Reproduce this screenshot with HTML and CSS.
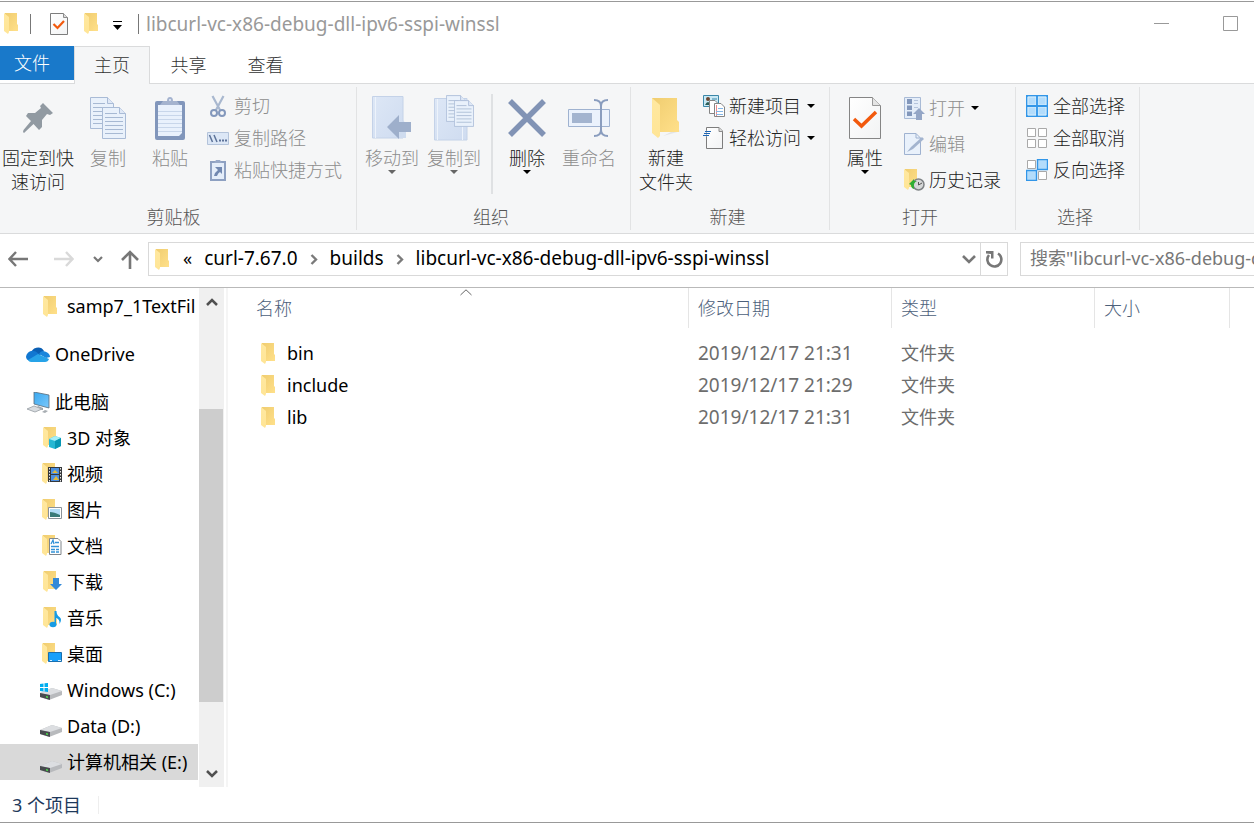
FILE: index.html
```html
<!DOCTYPE html>
<html lang="zh-CN">
<head>
<meta charset="utf-8">
<title>libcurl-vc-x86-debug-dll-ipv6-sspi-winssl</title>
<link rel="stylesheet" href="styles.css">
</head>
<body>
<svg class="defs" width="0" height="0" aria-hidden="true">
  <defs>
    <linearGradient id="gold" x1="0" x2="1" y1="0" y2="1"><stop offset="0" stop-color="#f0cd70"/><stop offset="1" stop-color="#ffe08a"/></linearGradient>
    <linearGradient id="flap" x1="0" x2="0" y1="0" y2="1"><stop offset="0" stop-color="#ffe8a0"/><stop offset="1" stop-color="#ffe596"/></linearGradient>
    <linearGradient id="paper" x1="0" x2="1" y1="0" y2="1"><stop offset="0" stop-color="#fff"/><stop offset="1" stop-color="#f2f3f4"/></linearGradient>
    <linearGradient id="blueSheet" x1="0" x2="1" y1="0" y2="1"><stop offset="0" stop-color="#dde7f6"/><stop offset="1" stop-color="#cfdcf0"/></linearGradient>
    <linearGradient id="screen" x1="0" x2="1" y1="0" y2="1"><stop offset="0" stop-color="#38a8f0"/><stop offset="1" stop-color="#7cc8fa"/></linearGradient>
    <symbol id="folder" viewBox="0 0 14 21"><path d="M1 0H13V11L14 12V18H1z" fill="url(#gold)"/><path d="M0 0L5 4V19L4 21L0 18z" fill="url(#flap)"/></symbol>
    <symbol id="sheet" viewBox="0 0 24 32"><path d="M.5 .5H17.5L23.5 6.5V31.5H.5z" fill="#e9f1fb" stroke="#a9bbd6"/><path d="M17.5 .5V6.5H23.5" fill="#dfe8f6" stroke="#a9bbd6"/><path d="M3 6.5H15M3 10.5H21M3 14.5H21M3 18.5H21M3 22.5H21M3 26.5H21" stroke="#a7b9d3"/></symbol>
    <symbol id="drive" viewBox="0 0 22 12"><path d="M0 5L12 0L22 3V7L9 12L0 9z" fill="#b8babd"/><path d="M0 5L12 0L22 3L10 7z" fill="#dcdee1"/><path d="M0 5L10 7V12L0 9z" fill="#484b4e"/><path d="M6 8L8 8.500V10L6 9.500z" fill="#4ce04c"/></symbol>
    <symbol id="caret" viewBox="0 0 8 4"><path d="M0 0H8L4 4z" fill="currentColor"/></symbol>
    <symbol id="crumb" viewBox="0 0 8 11"><path d="M1.500 1L6 5.500L1.500 10" fill="none" stroke="#7a7a7a" stroke-width="2.400"/></symbol>
  </defs>
</svg>

<div class="window">
  <header class="titlebar">
    <svg class="i-folder" width="14" height="21"><use href="#folder"/></svg>
    <span class="bar"></span>
    <div class="quick">
      <button type="button" aria-label="属性"><svg width="18" height="22" viewBox="0 0 18 22"><path d="M.5 .5H13.5L17.500 4.500V21.500H.5z" fill="url(#paper)" stroke="#7d7d7d"/><path d="M13.500 .5V4.500H17.500" fill="#ddd" stroke="#8d8d8d"/><path d="M3.500 11L7.500 15L14 8" fill="none" stroke="#f2590d" stroke-width="2.200"/></svg></button>
      <button type="button" aria-label="新建文件夹"><svg width="14" height="21"><use href="#folder"/></svg></button>
      <button type="button" class="customize" aria-label="自定义快速访问工具栏"><svg width="9" height="9" viewBox="0 0 9 9"><path d="M0 .5H9" stroke="#000"/><path d="M0 4H9L4.500 9z"/></svg></button>
    </div>
    <span class="bar"></span>
    <h1>libcurl-vc-x86-debug-dll-ipv6-sspi-winssl</h1>
    <div class="caption">
      <button type="button" aria-label="最小化"><svg width="15" height="15" viewBox="0 0 15 15"><path d="M0 7.500H15" stroke="#999"/></svg></button>
      <button type="button" aria-label="最大化"><svg width="15" height="15" viewBox="0 0 15 15"><path d="M.5 .5H14.500V14.500H.5z" fill="none" stroke="#999"/></svg></button>
    </div>
  </header>

  <nav class="tabs">
    <button type="button" class="tab file">文件</button>
    <button type="button" class="tab active">主页</button>
    <button type="button" class="tab">共享</button>
    <button type="button" class="tab">查看</button>
  </nav>

  <section class="ribbon">
    <div class="group clipboard">
      <div class="tools">
        <button type="button" class="big wide"><span class="pic"><svg width="32" height="32" viewBox="0 0 32 32"><path d="M21 1L31 11L28 13L25 12L20 18V25L17 28L11.500 22L2 31L1 30L1.500 28L9 19L4 14L6 11H13L19 6L18 4z" fill="#919aa2"/></svg></span><span>固定到快速访问</span></button>
        <button type="button" class="big off"><span class="pic"><svg width="37" height="42" viewBox="0 0 37 42"><use href="#sheet" width="24" height="32"/><use href="#sheet" x="12" y="10" width="24" height="32"/></svg></span><span>复制</span></button>
        <button type="button" class="big off"><span class="pic"><svg width="31" height="43" viewBox="0 0 31 43"><rect y="4" width="30" height="39" rx="2" fill="#8196bb"/><path d="M3 8H27V36L24 39H3z" fill="#e9f1fc"/><path d="M3 14.500H27M3 18.500H27M3 22.500H27M3 26.500H27M3 30.500H27M3 34.500H27" stroke="#c8d6ea"/><path d="M5 8L8 4H12Q12 0 15 0T18 4H22L25 8z" fill="#a4b3cf"/><circle cx="15" cy="3" r="1" fill="#e9f1fc"/></svg></span><span>粘贴</span></button>
        <div class="stack">
          <button type="button" class="small off"><span class="ico"><svg width="16" height="23" viewBox="0 0 16 23"><path d="M2.500 1L10 15M13.500 1L6 15" stroke="#a9b8cf" stroke-width="2.200"/><circle cx="4" cy="18" r="3" fill="none" stroke="#8398bc" stroke-width="2"/><circle cx="12" cy="18" r="3" fill="none" stroke="#8398bc" stroke-width="2"/></svg></span>剪切</button>
          <button type="button" class="small off"><span class="ico"><svg width="22" height="13" viewBox="0 0 22 13"><path d="M.5 .5H21.500V12.500H.5z" fill="#dce7f6" stroke="#b3c3da"/><path d="M2.500 3L5.500 10M7 3L10 10" stroke="#5d7399" stroke-width="1.500"/><path d="M12 8.500H14M15 8.500H17M18 8.500H20" stroke="#5d7399" stroke-width="2"/></svg></span>复制路径</button>
          <button type="button" class="small off"><span class="ico"><svg width="16" height="22" viewBox="0 0 16 22"><path d="M1 3H15V21H1z" fill="#e4edf9" stroke="#8da0c1" stroke-width="2"/><path d="M4 4L6 1H10L12 4z" fill="#98a9c7"/><path d="M5 8H12V15L10 13Q8 14 7 17H4Q5 13 8 11z" fill="#7188b0"/></svg></span>粘贴快捷方式</button>
        </div>
      </div>
      <h2>剪贴板</h2>
    </div>

    <div class="group organize">
      <div class="tools">
        <button type="button" class="big off"><span class="pic"><svg width="40" height="44" viewBox="0 0 40 44"><path d="M.5 .5H31V42H.5z" fill="url(#blueSheet)" stroke="#c4d2e8"/><path d="M3.500 1V42" stroke="#edf3fb"/><path d="M28 30L31 24L34 28V42H28z" fill="#cfdcef"/><path d="M15 31L27 19V26H39V36H27V43z" fill="#9eafcb"/></svg></span><span>移动到</span><svg class="drop" width="8" height="4"><use href="#caret"/></svg></button>
        <button type="button" class="big off"><span class="pic"><svg width="40" height="46" viewBox="0 0 40 46"><path d="M.5 3.500H33V45H.5z" fill="url(#blueSheet)" stroke="#c4d2e8"/><path d="M3.500 4V45M28.500 30V45" stroke="#edf3fb"/><use href="#sheet" x="12" width="20" height="27"/><use href="#sheet" x="20" y="5" width="20" height="27"/></svg></span><span>复制到</span><svg class="drop" width="8" height="4"><use href="#caret"/></svg></button>
        <span class="split"></span>
        <button type="button" class="big"><span class="pic"><svg width="38" height="38" viewBox="0 0 38 38"><path d="M2 2L36 36M36 2L2 36" stroke="#8193b5" stroke-width="5.500"/></svg></span><span>删除</span><svg class="drop" width="8" height="4"><use href="#caret"/></svg></button>
        <button type="button" class="big off"><span class="pic"><svg width="42" height="38" viewBox="0 0 42 38"><path d="M.5 10.500H41.500V27.500H.5z" fill="#ebf2fc" stroke="#9fb2d0"/><path d="M4 14H24V24H4z" fill="#a3b4cf"/><path d="M26 1Q33 1 33 7V31Q33 37 26 37M40 1Q33 1 33 7V31Q33 37 40 37" fill="none" stroke="#8a9dbe" stroke-width="2"/></svg></span><span>重命名</span></button>
      </div>
      <h2>组织</h2>
    </div>

    <div class="group create">
      <div class="tools">
        <button type="button" class="big"><span class="pic"><svg width="30" height="42" viewBox="0 0 30 42"><path d="M24 33L30 34L12 39z" fill="#e3e4e6"/><path d="M1 1H26V23L28 25V35H1z" fill="url(#gold)"/><path d="M1 1L9 8V39L7 41L1 36z" fill="url(#flap)"/></svg></span><span>新建<br>文件夹</span></button>
        <div class="stack">
          <button type="button" class="small"><span class="ico"><svg width="22" height="22" viewBox="0 0 22 22"><path d="M.5 .5H15.500V11.500H.5z" fill="#c9e9f5" stroke="#3b87a8"/><circle cx="5" cy="4" r="2" fill="#6b4732"/><path d="M2 10Q5 4 8 10z" fill="#2d5e57"/><path d="M9 4H14" stroke="#3b87a8"/><path d="M6.500 5.500H12L14.500 8V18.500H6.500z" fill="#fff" stroke="#858585"/><path d="M11.500 8.500H18L21.500 12V21.500H11.500z" fill="#fff" stroke="#858585"/><path d="M13.500 10V21" stroke="#e88"/><path d="M15 13.500H20M13 16.500H20M13 19.500H20" stroke="#84b6e6"/></svg></span>新建项目<svg class="arrow" width="8" height="4"><use href="#caret"/></svg></button>
          <button type="button" class="small"><span class="ico"><svg width="22" height="22" viewBox="0 0 22 22"><path d="M3.500 .5H16L19.500 4V21.500H3.500z" fill="url(#paper)" stroke="#7d7d7d"/><path d="M16 .5V4.500H19.500" fill="#ddd" stroke="#8d8d8d"/><path d="M3 4.500H3.500M1 6.500H3.500M0 8.500H3.500" stroke="#f5f6f7" stroke-width="2"/><path d="M2 4.500H8M1 6.500H7M0 8.500H6" stroke="#1e66b4" stroke-width="1.200"/></svg></span>轻松访问<svg class="arrow" width="8" height="4"><use href="#caret"/></svg></button>
        </div>
      </div>
      <h2>新建</h2>
    </div>

    <div class="group open">
      <div class="tools">
        <button type="button" class="big"><span class="pic"><svg width="32" height="42" viewBox="0 0 32 42"><path d="M.5 .5H23.500L31.500 8.500V41.500H.5z" fill="url(#paper)" stroke="#858585"/><path d="M23.500 .5V8.500H31.500" fill="#e4e4e4" stroke="#999"/><path d="M5 22L12.500 29L27 15" fill="none" stroke="#f2590d" stroke-width="3.500"/></svg></span><span>属性</span><svg class="drop" width="8" height="4"><use href="#caret"/></svg></button>
        <div class="stack">
          <button type="button" class="small off"><span class="ico"><svg width="21" height="23" viewBox="0 0 21 23"><path d="M.5 .5H16.500V21.500H.5z" fill="#e4edf9" stroke="#a9bbd6"/><path d="M3 2H8V7H3zM3 8.500H8V13H3zM3 14.500H8V19H3z" fill="#8297bb"/><path d="M10 3.500H14M10 6.500H14M10 10.500H14" stroke="#b5c4dc"/><path d="M15 11L21 17H18V23H12V17H9z" fill="#94a6c6"/></svg></span>打开<svg class="arrow" width="8" height="4"><use href="#caret"/></svg></button>
          <button type="button" class="small off"><span class="ico"><svg width="21" height="22" viewBox="0 0 21 22"><path d="M.5 .5H12L16.500 5V21.500H.5z" fill="#e9f1fb" stroke="#9fb2d0"/><path d="M12 .5V5H16.500" fill="none" stroke="#9fb2d0"/><path d="M3 19L7 14L18 4L20 6L9 16z" fill="#a3b4cf"/></svg></span>编辑</button>
          <button type="button" class="small"><span class="ico"><svg width="21" height="22" viewBox="0 0 21 22"><use href="#folder" x="0" y="0" width="14" height="21"/><circle cx="14.500" cy="15.500" r="5.500" fill="#d5d7d8" stroke="#7e8285" stroke-width="1.500"/><path d="M14.500 13V16L18 14" fill="none" stroke="#555"/><path d="M5 15L10 10V12L13 12Q9 13 10 20Q7 19 7 16z" fill="#2ead33"/></svg></span>历史记录</button>
        </div>
      </div>
      <h2>打开</h2>
    </div>

    <div class="group select">
      <div class="tools">
        <div class="stack">
          <button type="button" class="small"><span class="ico"><svg width="22" height="22" viewBox="0 0 22 22"><path d="M.75 .75H21.250V21.250H.75z" fill="#b3dcfb" stroke="#3296e8" stroke-width="1.500"/><path d="M2 2H10V10H2zM12 2H20V10H12zM2 12H10V20H2zM12 12H20V20H12z" fill="none" stroke="#e1f2fe" stroke-width=".8"/><path d="M11 0V22M0 11H22" stroke="#3296e8" stroke-width="1.800"/></svg></span>全部选择</button>
          <button type="button" class="small"><span class="ico"><svg width="22" height="22" viewBox="0 0 22 22"><path d="M1.500 1.500H9.500V9.500H1.500zM12.500 1.500H20.500V9.500H12.500zM1.500 12.500H9.500V20.500H1.500zM12.500 12.500H20.500V20.500H12.500z" fill="#fff" stroke="#a9a9a9"/></svg></span>全部取消</button>
          <button type="button" class="small"><span class="ico"><svg width="22" height="22" viewBox="0 0 22 22"><path d="M1.500 1.500H9.500V9.500H1.500zM12.500 12.500H20.500V20.500H12.500z" fill="#fff" stroke="#a9a9a9"/><path d="M11.500 .5H21.500V10.500H11.500zM.5 11.500H10.500V21.500H.5z" fill="#b3dcfb" stroke="#3296e8" stroke-width="1.400"/></svg></span>反向选择</button>
        </div>
      </div>
      <h2>选择</h2>
    </div>
  </section>

  <div class="address">
    <div class="nav">
      <button type="button" aria-label="后退"><svg width="20" height="16" viewBox="0 0 20 16"><path d="M8 1L1.500 8L8 15M2 8H20" fill="none" stroke="#777" stroke-width="2.400"/></svg></button>
      <button type="button" aria-label="前进"><svg width="20" height="16" viewBox="0 0 20 16"><path d="M12 1L18.500 8L12 15M18 8H0" fill="none" stroke="#d9d9d9" stroke-width="2.400"/></svg></button>
      <button type="button" aria-label="最近浏览的位置"><svg width="10" height="7" viewBox="0 0 10 7"><path d="M1 1L5 5L9 1" fill="none" stroke="#777" stroke-width="2.200"/></svg></button>
      <button type="button" aria-label="上移"><svg width="18" height="19" viewBox="0 0 18 19"><path d="M1 10L9 2L17 10M9 2V19" fill="none" stroke="#777" stroke-width="2.600"/></svg></button>
    </div>
    <div class="path">
      <svg width="14" height="21"><use href="#folder"/></svg>
      <span class="more">«</span>
      <a href="#">curl-7.67.0</a>
      <svg width="8" height="11"><use href="#crumb"/></svg>
      <a href="#">builds</a>
      <svg width="8" height="11"><use href="#crumb"/></svg>
      <a href="#">libcurl-vc-x86-debug-dll-ipv6-sspi-winssl</a>
      <button type="button" class="history" aria-label="以前的位置"><svg width="14" height="9" viewBox="0 0 14 9"><path d="M1 1L7 7L13 1" fill="none" stroke="#777" stroke-width="2.600"/></svg></button>
      <button type="button" class="refresh" aria-label="刷新"><svg width="18" height="18" viewBox="0 0 18 18"><path d="M13 3.500A7 7 0 1 1 4 5" fill="none" stroke="#777" stroke-width="2.600"/><path d="M1 1H8.500V8.500H6V4L1 3.500z" fill="#777"/></svg></button>
    </div>
    <input class="search" type="text" aria-label="搜索" placeholder="搜索&quot;libcurl-vc-x86-debug-dll-ipv6-sspi-winssl&quot;">
  </div>

  <main class="body">
    <aside class="side">
      <ul class="tree">
        <li class="sub"><svg width="22" height="24" viewBox="0 0 22 24"><use href="#folder" x="3" y="2" width="14" height="21"/></svg><span>samp7_1TextFil</span></li>
        <li class="top"><svg width="24" height="16" viewBox="0 0 24 16"><path d="M5 8A7 7 0 0 1 18 5L14 9z" fill="#0a5fb4"/><path d="M5 5Q9 4 13 8L4 15Q0 14 0 10.500Q1 6 5 5z" fill="#1177d1"/><path d="M13 8Q15 4 19 5.500Q24 7 24 11L20 12z" fill="#1a86dc"/><path d="M2 14L12 8L23 13Q22 16 19 16H5Q3 16 2 14z" fill="#27a3e8"/></svg><span>OneDrive</span></li>
        <li class="top"><svg width="24" height="21" viewBox="0 0 24 21"><path d="M8 0L23 3V16L8 12z" fill="url(#screen)" stroke="#5b6b78" stroke-width=".8"/><path d="M12 14L17 16V18H9z" fill="#9aa3ab"/><path d="M1 17L8 14L16 17L9 20z" fill="#d8dce0" stroke="#a7adb2"/><path d="M16 20L19 18L22 19L19 21z" fill="#a7adb2"/></svg><span>此电脑</span></li>
        <li class="sub"><svg width="22" height="24" viewBox="0 0 22 24"><use href="#folder" x="3" y="1" width="14" height="21"/><path d="M9 13L15 10L21 12V20L15 23L9 21z" fill="#25b7d3"/><path d="M9 13L15 10L21 12L15 15z" fill="#a5eef7"/><path d="M15 15L21 12V20L15 23z" fill="#0797b4"/></svg><span>3D 对象</span></li>
        <li class="sub"><svg width="24" height="24" viewBox="0 0 24 24"><use href="#folder" x="3" y="1" width="14" height="21"/><path d="M9 5H23V20H9z" fill="#35383b"/><path d="M12 6H20V12H12zM12 13H20V19H12z" fill="#4c8fe0"/><path d="M13 11L16 8L19 11zM14 18L17 14L20 18z" fill="#e5b936"/><path d="M10.500 6V20M21.500 6V20" stroke="#e8e8e8" stroke-dasharray="1.500 1.500"/></svg><span>视频</span></li>
        <li class="sub"><svg width="24" height="24" viewBox="0 0 24 24"><use href="#folder" x="3" y="1" width="14" height="21"/><path d="M9.500 9.500H22.500V20.500H9.500z" fill="#fff" stroke="#8b9298"/><path d="M11 11H21V19H11z" fill="#b2dcf6"/><path d="M11 14Q15 14 21 17V19H11z" fill="#397a78"/></svg><span>图片</span></li>
        <li class="sub"><svg width="24" height="24" viewBox="0 0 24 24"><use href="#folder" x="3" y="1" width="14" height="21"/><path d="M10.500 4.500H19L22 7.500V20.500H10.500z" fill="#fff" stroke="#80868b"/><path d="M12 10L14 6L15 10M16 8.500H20M12 12.500H20M12 15.500H16M12 18H16M17 15.500H20M17 18H20" fill="none" stroke="#3292d8" stroke-width="1.300"/></svg><span>文档</span></li>
        <li class="sub"><svg width="22" height="24" viewBox="0 0 22 24"><use href="#folder" x="3" y="1" width="14" height="21"/><path d="M13 8H19V14H22L16 20L10 14H13z" fill="#3389d8"/></svg><span>下载</span></li>
        <li class="sub"><svg width="22" height="24" viewBox="0 0 22 24"><use href="#folder" x="3" y="1" width="14" height="21"/><ellipse cx="13" cy="18.500" rx="3.500" ry="2.800" fill="#159be5"/><path d="M14.500 18V5H16.500Q16.500 9 19.500 11T19.500 18Q20 13 16 12V18z" fill="#159be5"/></svg><span>音乐</span></li>
        <li class="sub"><svg width="24" height="24" viewBox="0 0 24 24"><use href="#folder" x="3" y="1" width="14" height="21"/><path d="M9.500 10.500H22.500V19.500H9.500z" fill="#18a0fb" stroke="#1b6fae"/><path d="M11 18.500H13M19 18.500H22" stroke="#d7efff"/></svg><span>桌面</span></li>
        <li class="sub"><svg width="22" height="24" viewBox="0 0 22 24"><use href="#drive" y="10" width="22" height="12"/><path d="M0 6L3.500 5.500V9H0zM4.500 5.300L8 5V9H4.500zM0 10H3.500V13.500L0 13zM4.500 10H8V14L4.500 13.500z" fill="#00adef"/></svg><span>Windows (C:)</span></li>
        <li class="sub"><svg width="22" height="24" viewBox="0 0 22 24"><use href="#drive" y="11" width="22" height="12"/></svg><span>Data (D:)</span></li>
        <li class="sub selected"><svg width="22" height="24" viewBox="0 0 22 24"><use href="#drive" y="11" width="22" height="12"/></svg><span>计算机相关 (E:)</span></li>
      </ul>
      <div class="scroll">
        <button type="button" aria-label="向上滚动"><svg width="12" height="10" viewBox="0 0 12 10"><path d="M1 8L6 3L11 8" fill="none" stroke="#505050" stroke-width="2.500"/></svg></button>
        <div class="track"><div class="thumb"></div></div>
        <button type="button" aria-label="向下滚动"><svg width="12" height="10" viewBox="0 0 12 10"><path d="M1 2L6 7L11 2" fill="none" stroke="#505050" stroke-width="2.500"/></svg></button>
      </div>
    </aside>

    <section class="files">
      <table>
        <colgroup><col class="c-name"><col class="c-date"><col class="c-type"><col class="c-size"><col></colgroup>
        <thead>
          <tr><th class="sorted">名称<svg class="sort" width="12" height="7" viewBox="0 0 12 7"><path d="M.5 6L6 .8L11.500 6" fill="none" stroke="#666"/></svg></th><th>修改日期</th><th>类型</th><th>大小</th><td></td></tr>
        </thead>
        <tbody>
          <tr><td><div class="entry"><svg width="14" height="21"><use href="#folder"/></svg>bin</div></td><td class="date">2019/12/17 21:31</td><td>文件夹</td><td></td><td></td></tr>
          <tr><td><div class="entry"><svg width="14" height="21"><use href="#folder"/></svg>include</div></td><td class="date">2019/12/17 21:29</td><td>文件夹</td><td></td><td></td></tr>
          <tr><td><div class="entry"><svg width="14" height="21"><use href="#folder"/></svg>lib</div></td><td class="date">2019/12/17 21:31</td><td>文件夹</td><td></td><td></td></tr>
        </tbody>
      </table>
    </section>
  </main>

  <footer class="status"><span>3 个项目</span></footer>
</div>
</body>
</html>
```

FILE: styles.css
```css
* { box-sizing: border-box; }

body {
  margin: 0;
  background: #fff;
  color: #000;
  font: 18px/24px "Noto Sans", "Noto Sans CJK SC", sans-serif;
}

button {
  display: flex;
  align-items: center;
  justify-content: center;
  margin: 0;
  padding: 0;
  border: 0;
  background: none;
  color: inherit;
  font: inherit;
}

h1, h2 { margin: 0; font-size: 18px; font-weight: 400; }
svg { flex: none; display: block; }
.defs { position: absolute; }

.window {
  display: flex;
  flex-direction: column;
  min-height: 100vh;
  overflow: hidden;
  padding: 1px 0;
}

/* Title bar */
.titlebar {
  display: flex;
  align-items: center;
  height: 45px;
  padding: 0 16px 1px 4px;
  border-top: 1px solid #999;
}
.bar { width: 1px; height: 20px; margin-left: 12px; background: #777; }
.quick { display: flex; align-items: center; gap: 16px; margin-left: 19px; }
.customize { margin: 4px 0 0 -1px; }
.quick + .bar { margin-left: 16px; }
.titlebar h1 { flex: 1; margin-left: 7px; color: #999; font-size: 19px; }
.caption { display: flex; gap: 54px; }

/* Tabs */
.tabs, .ribbon, th { font-weight: 300; }
.tabs { display: flex; height: 38px; background: #fff; border-bottom: 1px solid #dadbdc; }
.tab { width: 77px; color: #333; }
.tab.file { width: 74px; height: 34px; padding-right: 10px; background: #1979ca; color: #fff; }
.tab.active { width: 76px; height: 38px; padding-bottom: 2px; border: 1px solid #dadbdc; border-bottom: 0; background: #f5f6f7; }

/* Ribbon */
.ribbon { display: flex; height: 150px; padding: 3px 0; background: #f5f6f7; border-bottom: 1px solid #dadbdc; }
.group { display: flex; flex-direction: column; justify-content: space-between; border-right: 1px solid #e2e3e4; }
.group h2 { padding: 0 5px 1px 0; color: #555; font-weight: inherit; text-align: center; }
.clipboard { width: 357px; }
.organize { width: 274px; }
.organize, .create, .open { padding-left: 4px; }
.clipboard h2, .organize h2, .create h2, .open h2 { padding-right: 9px; }
.create { width: 199px; }
.open { width: 186px; }
.select { width: 124px; }
.tools { display: flex; align-items: flex-start; padding-top: 3px; white-space: nowrap; }
.big { flex-direction: column; width: 62px; color: #222; }
.big.wide { width: 77px; padding-right: 1px; white-space: normal; }
.big .pic { display: flex; align-items: center; justify-content: center; height: 56px; }
.off { color: #8d8d8d; }
.split { width: 2px; height: 100px; margin: 4px 3px 0 6px; background: #dfe1e3; }
.drop { color: #000; }
.off .drop, .off .arrow { color: #666; }
.stack { display: grid; grid-auto-rows: 32px; justify-items: start; padding-left: 6px; }
.open .stack { grid-auto-rows: 36px; padding-left: 7px; }
.select .stack { padding-left: 10px; }
.small { color: #222; }
.small.off { color: #8d8d8d; }
.small .ico { display: flex; align-items: center; justify-content: center; width: 22px; margin-right: 5px; }
.create .ico, .open .ico { margin-right: 4px; }
.small .arrow { margin-left: 6px; color: #000; }

/* Address bar */
.address { display: flex; align-items: center; height: 54px; padding-bottom: 3px; border-bottom: 1px solid #b9b9b9; font-size: 19px; }
.nav { display: flex; align-items: center; gap: 26px; padding-left: 8px; }
.nav button:nth-child(3) { margin-left: -7px; }
.nav button:nth-child(4) { margin-left: -8px; }
.path {
  display: flex;
  align-items: center;
  flex: 1;
  min-width: 0;
  height: 34px;
  margin-left: 9px;
  padding-left: 6px;
  border: 1px solid #d9d9d9;
  white-space: nowrap;
}
.path a { color: #000; text-decoration: none; margin: 0 12px; padding-bottom: 2px; }
.path .more { margin-left: 14px; font-size: 18px; padding-bottom: 2px; }
.history { width: 22px; height: 32px; margin-left: auto; }
.refresh { width: 27px; height: 32px; border-left: 1px solid #d9d9d9; }
.search {
  width: 234px;
  height: 34px;
  margin: 0 0 0 12px;
  padding: 0 0 2px 9px;
  border: 1px solid #d9d9d9;
  border-right: 0;
  border-radius: 0;
  background: #fff;
  font: inherit;
  font-size: 18px;
}
.search::placeholder { color: #777; opacity: 1; }

/* Navigation tree */
.body { display: flex; flex: 1; }
.side { display: flex; width: 228px; border-right: 2px solid #f5f5f5; }
.tree { flex: 1; min-width: 0; margin: 0; padding: 0 1px 7px 0; list-style: none; }
.tree li { display: flex; align-items: center; height: 36px; white-space: nowrap; overflow: hidden; }
.top { gap: 5px; margin-top: 12px; padding-left: 26px; }
.sub { padding-left: 39px; }
.sub svg { width: 24px; margin-right: 4px; }
.selected { background: #d9d9d9; }
.scroll { display: flex; flex-direction: column; width: 25px; margin-right: 2px; background: #f0f0f0; }
.scroll button { height: 27px; }
.track { display: flex; flex-direction: column; flex: 1; }
.track::before { content: ""; flex: 94; }
.track::after { content: ""; flex: 58; }
.thumb { flex: 293; margin-right: 1px; background: #cdcdcd; }

/* File list */
.files { flex: 1; min-width: 0; padding-left: 12px; }
table { width: 100%; table-layout: fixed; border-collapse: separate; border-spacing: 0; }
.c-name { width: 449px; }
.c-date, .c-type { width: 203px; }
.c-size { width: 135px; }
th { height: 40px; padding: 0 0 0 9px; border-right: 1px solid #e5e5e5; color: #4c607a; text-align: left; }
th.sorted { position: relative; padding-left: 16px; }
.sort { position: absolute; left: 49%; top: 1px; }
tbody::before { content: ""; display: block; height: 9px; }
tbody td { height: 32px; padding: 0 0 0 9px; color: #6d6d6d; }
tbody td:first-child { padding-left: 21px; color: #000; }
tbody .date { font-size: 19px; }
.entry { display: flex; align-items: center; gap: 12px; }

/* Status bar */
.status { display: flex; align-items: center; height: 36px; padding-left: 12px; border-bottom: 1px solid #999; color: #1e395b; }
.status span { padding-right: 17px; border-right: 1px solid #eee; line-height: 18px; }
```
